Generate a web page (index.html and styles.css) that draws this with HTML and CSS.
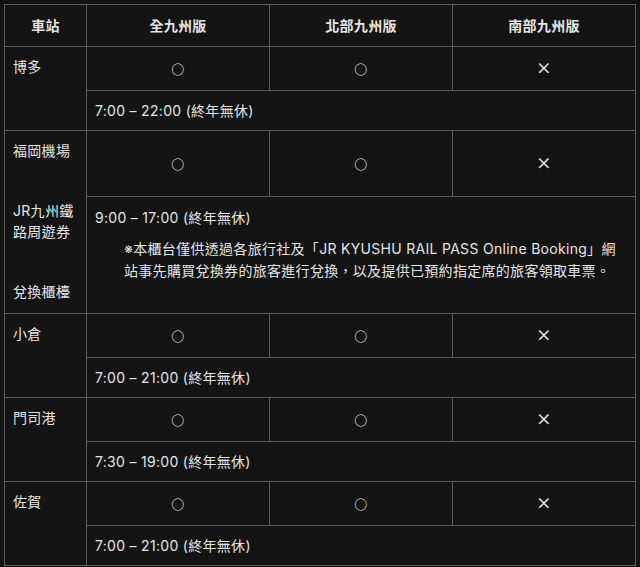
FILE: index.html
```html
<!DOCTYPE html>
<html lang="zh-Hant">
<head>
<meta charset="utf-8">
<link rel="stylesheet" href="styles.css">
</head>
<body>
<table class="pass-table">
  <colgroup>
    <col class="c-station">
    <col class="c-pass">
    <col class="c-pass">
    <col class="c-pass">
  </colgroup>
  <thead>
    <tr>
      <th>車站</th>
      <th>全九州版</th>
      <th>北部九州版</th>
      <th>南部九州版</th>
    </tr>
  </thead>
  <tbody>
    <tr>
      <td class="station" rowspan="2">博多</td>
      <td class="mark"><span class="yes">○</span></td>
      <td class="mark"><span class="yes">○</span></td>
      <td class="mark"><span class="no">×</span></td>
    </tr>
    <tr><td class="hours" colspan="3">7:00 – 22:00 (終年無休)</td></tr>

    <tr>
      <td class="station multi" rowspan="2">
        <div class="blk">福岡機場</div>
        <div class="blk mid">JR九州鐵<br>路周遊券</div>
        <div class="blk">兌換櫃檯</div>
      </td>
      <td class="mark tall"><span class="yes">○</span></td>
      <td class="mark tall"><span class="yes">○</span></td>
      <td class="mark tall"><span class="no">×</span></td>
    </tr>
    <tr>
      <td class="hours top" colspan="3">
        <div>9:00 – 17:00 (終年無休)</div>
        <p class="note">※本櫃台僅供透過各旅行社及「JR KYUSHU RAIL PASS Online Booking」網站事先購買兌換券的旅客進行兌換，以及提供已預約指定席的旅客領取車票。</p>
      </td>
    </tr>

    <tr>
      <td class="station" rowspan="2">小倉</td>
      <td class="mark"><span class="yes">○</span></td>
      <td class="mark"><span class="yes">○</span></td>
      <td class="mark"><span class="no">×</span></td>
    </tr>
    <tr><td class="hours" colspan="3">7:00 – 21:00 (終年無休)</td></tr>

    <tr>
      <td class="station" rowspan="2">門司港</td>
      <td class="mark"><span class="yes">○</span></td>
      <td class="mark"><span class="yes">○</span></td>
      <td class="mark"><span class="no">×</span></td>
    </tr>
    <tr><td class="hours" colspan="3">7:30 – 19:00 (終年無休)</td></tr>

    <tr>
      <td class="station" rowspan="2">佐賀</td>
      <td class="mark"><span class="yes">○</span></td>
      <td class="mark"><span class="yes">○</span></td>
      <td class="mark"><span class="no">×</span></td>
    </tr>
    <tr><td class="hours" colspan="3">7:00 – 21:00 (終年無休)</td></tr>
  </tbody>
</table>
</body>
</html>
```
FILE: styles.css
```css
html, body {
  background: #141414;
}
body {
  margin: 4px;
  color: #e4e4e4;
  font-family: Inter, "Noto Sans CJK TC", sans-serif;
  font-size: 14px;
  line-height: 22px;
  letter-spacing: 0.3px;
}
.pass-table {
  width: 632px;
  border-collapse: collapse;
  table-layout: fixed;
  border: 1px solid #6a6a6a;
}
.c-station { width: 82px; }
.pass-table th,
.pass-table td {
  border: 1px solid #5c5c5c;
  padding: 9px 8px 9px;
}
.pass-table th {
  font-weight: 700;
  text-align: center;
  vertical-align: middle;
  padding: 10px 8px 9px;
}
.station {
  vertical-align: top;
  padding-top: 10px;
}
.mark {
  text-align: center;
  vertical-align: middle;
}
.mark.tall {
  height: 47px;
}
.yes {
  font-family: "Noto Sans CJK TC", sans-serif;
  font-weight: 700;
  font-size: 13px;
}
.no {
  font-family: Inter, sans-serif;
  font-weight: 300;
  font-size: 23px;
}
.pass-table .hours {
  vertical-align: middle;
  padding-bottom: 8px;
}
.pass-table .hours.top {
  vertical-align: top;
  height: 97px;
  padding-top: 10px;
  padding-bottom: 9px;
}
.note {
  margin: 9px 0 0 0;
  padding: 0 8px 0 29px;
}
.multi {
  padding-top: 11px;
}
.multi .blk {
  line-height: 21px;
}
.multi .mid {
  margin: 39px 0;
}
```
